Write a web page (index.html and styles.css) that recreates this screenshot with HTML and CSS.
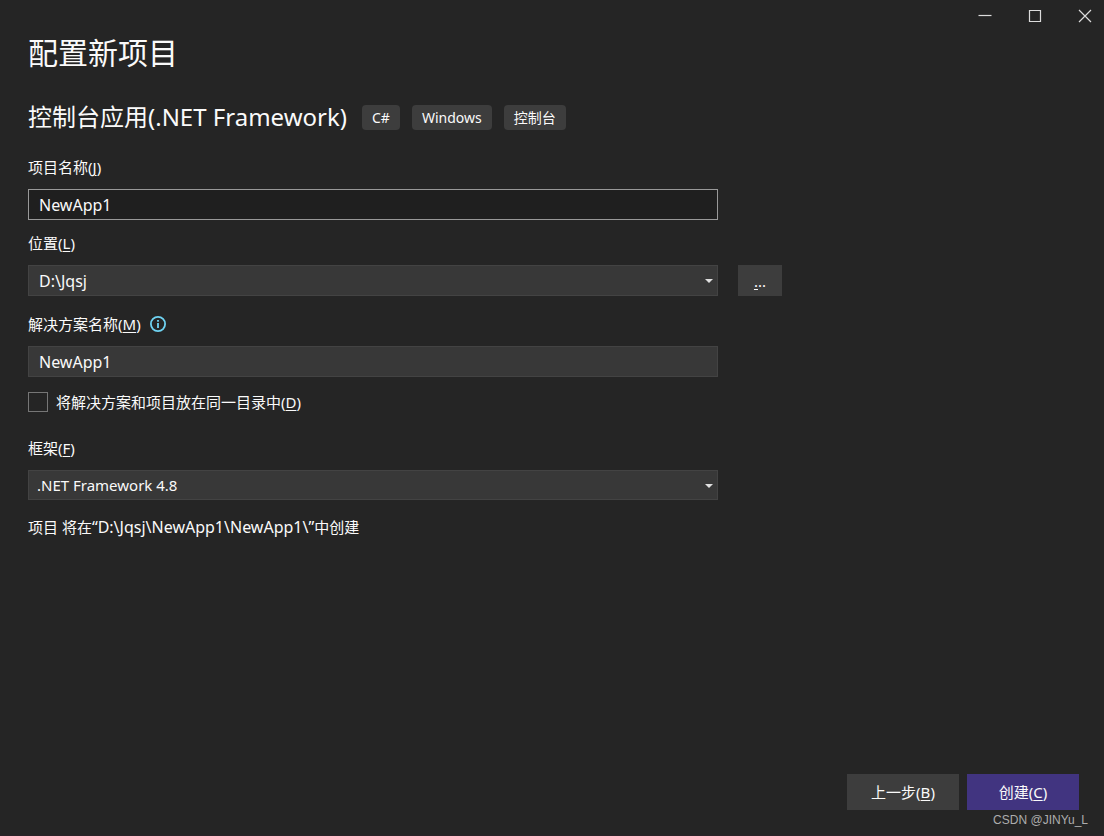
FILE: index.html
```html
<!DOCTYPE html>
<html lang="zh-CN">
<head>
    <meta charset="utf-8">
    <title>配置新项目</title>
    <link rel="stylesheet" href="styles.css">
</head>
<body>
    <div class="window">
        <header class="titlebar">
            <button type="button" aria-label="最小化">
                <svg width="14" height="14" viewBox="0 0 14 14"><path d="M0.5 6.5H13.5"/></svg>
            </button>
            <button type="button" aria-label="最大化">
                <svg width="14" height="14" viewBox="0 0 14 14"><path d="M1.5 1.5H12.5V12.5H1.5Z"/></svg>
            </button>
            <button type="button" aria-label="关闭">
                <svg width="14" height="14" viewBox="0 0 14 14"><path d="M1 1L13 13M13 1L1 13"/></svg>
            </button>
        </header>

        <form class="content">
            <h1>配置新项目</h1>

            <div class="template">
                <h2>控制台应用(.NET Framework)</h2>
                <span class="tag">C#</span>
                <span class="tag">Windows</span>
                <span class="tag">控制台</span>
            </div>

            <div class="field">
                <label for="projectName">项目名称(<u>J</u>)</label>
                <input class="box active" type="text" id="projectName" value="NewApp1">
            </div>

            <div class="field location">
                <label for="location">位置(<u>L</u>)</label>
                <div class="row">
                    <div class="combo">
                        <select class="box" id="location">
                            <option>D:\Jqsj</option>
                        </select>
                        <svg class="arrow" width="8" height="4" viewBox="0 0 8 4"><path d="M0 0H8L4 4Z"/></svg>
                    </div>
                    <button class="browse" type="button"><u>.</u>..</button>
                </div>
            </div>

            <div class="field">
                <div class="label-line">
                    <label for="solutionName">解决方案名称(<u>M</u>)</label>
                    <svg class="info" width="16" height="16" viewBox="0 0 16 16">
                        <circle cx="8" cy="8" r="7.1"/>
                        <path d="M8 7V12M8 4V5.8"/>
                    </svg>
                </div>
                <input class="box" type="text" id="solutionName" value="NewApp1">
            </div>

            <div class="check">
                <input type="checkbox" id="sameFolder">
                <label for="sameFolder">将解决方案和项目放在同一目录中(<u>D</u>)</label>
            </div>

            <div class="field">
                <label for="framework">框架(<u>F</u>)</label>
                <div class="combo">
                    <select class="box framework" id="framework">
                        <option>.NET Framework 4.8</option>
                    </select>
                    <svg class="arrow" width="8" height="4" viewBox="0 0 8 4"><path d="M0 0H8L4 4Z"/></svg>
                </div>
            </div>

            <p class="summary">项目 将在<span class="path">“D:\Jqsj\NewApp1\NewApp1\”</span>中创建</p>
        </form>

        <footer class="actions">
            <button type="button">上一步(<u>B</u>)</button>
            <button class="primary" type="button">创建(<u>C</u>)</button>
        </footer>
        <div class="watermark">CSDN @JINYu_L</div>
    </div>
</body>
</html>
```

FILE: styles.css
```css
* {
    box-sizing: border-box;
}

body {
    margin: 0;
    background-color: #252525;
    color: #fafafa;
    font-family: "Noto Sans", "Noto Sans CJK SC", sans-serif;
    font-size: 15px;
    line-height: 22px;
}

button,
input,
select {
    margin: 0;
    font: inherit;
    color: inherit;
}

u {
    text-underline-offset: 2px;
}

.window {
    display: flex;
    flex-direction: column;
    min-height: 100vh;
    border-bottom: 1px solid #2b2228;
}

.titlebar {
    display: flex;
    justify-content: flex-end;
    gap: 12px;
    height: 32px;
}

.titlebar button {
    display: flex;
    align-items: center;
    justify-content: center;
    width: 38px;
    padding: 0;
    border: none;
    background: none;
}

.titlebar svg {
    fill: none;
    stroke: #dcdcdc;
    stroke-width: 1.2;
}

.content {
    flex: 1;
    padding: 0 28px;
}

h1 {
    margin: 0;
    font-size: 30px;
    font-weight: 400;
    line-height: 42px;
}

.template {
    display: flex;
    align-items: center;
    gap: 12px;
    margin: 25px 0 21px;
}

h2 {
    margin: 0 3px 0 0;
    font-size: 24px;
    font-weight: 400;
    line-height: 36px;
}

.tag {
    height: 25px;
    padding: 0 10px;
    border-radius: 4px;
    background-color: #3d3d3d;
    font-size: 14px;
    line-height: 26px;
}

.field {
    max-width: 690px;
    margin-bottom: 12px;
}

.field label {
    display: block;
    margin-bottom: 11px;
}

.field.location {
    max-width: 754px;
    margin-bottom: 17px;
}

.box {
    display: block;
    width: 100%;
    height: 31px;
    padding: 0 10px;
    border: 1px solid #434343;
    border-radius: 0;
    outline: none;
    background-color: #383838;
    font-size: 16px;
    appearance: none;
}

.box.active {
    border-color: #999;
    background-color: #1f1f1f;
}

.box.framework {
    height: 30px;
    padding: 0 8px;
    font-size: 15px;
}

.row {
    display: flex;
    gap: 20px;
}

.combo {
    position: relative;
    flex: 1;
}

.arrow {
    position: absolute;
    top: 14px;
    right: 5px;
    fill: #e0e0e0;
    pointer-events: none;
}

.browse {
    width: 44px;
    padding: 0;
    border: none;
    background-color: #3d3d3d;
}

.label-line {
    display: flex;
    gap: 9px;
}

.info {
    margin-top: 3px;
    fill: none;
    stroke: #6fd3f2;
    stroke-width: 1.8;
}

.check {
    display: flex;
    align-items: center;
    gap: 8px;
    margin: 14px 0 24px;
}

.check input {
    width: 20px;
    height: 20px;
    border: 1px solid #767676;
    background-color: #252525;
    appearance: none;
}

.check input:checked {
    background-color: #413480;
}

.summary {
    margin: 16px 0 0;
}

.path {
    font-size: 16px;
}

.actions {
    display: flex;
    justify-content: flex-end;
    gap: 8px;
    padding: 0 25px;
}

.actions button {
    width: 112px;
    height: 36px;
    padding: 0;
    border: none;
    background-color: #3d3d3d;
}

.actions .primary {
    background-color: #413480;
}

.watermark {
    margin-bottom: 5px;
    padding-right: 16px;
    color: #adadad;
    font-family: "Liberation Sans", sans-serif;
    font-size: 12px;
    line-height: 20px;
    text-align: right;
}
```
